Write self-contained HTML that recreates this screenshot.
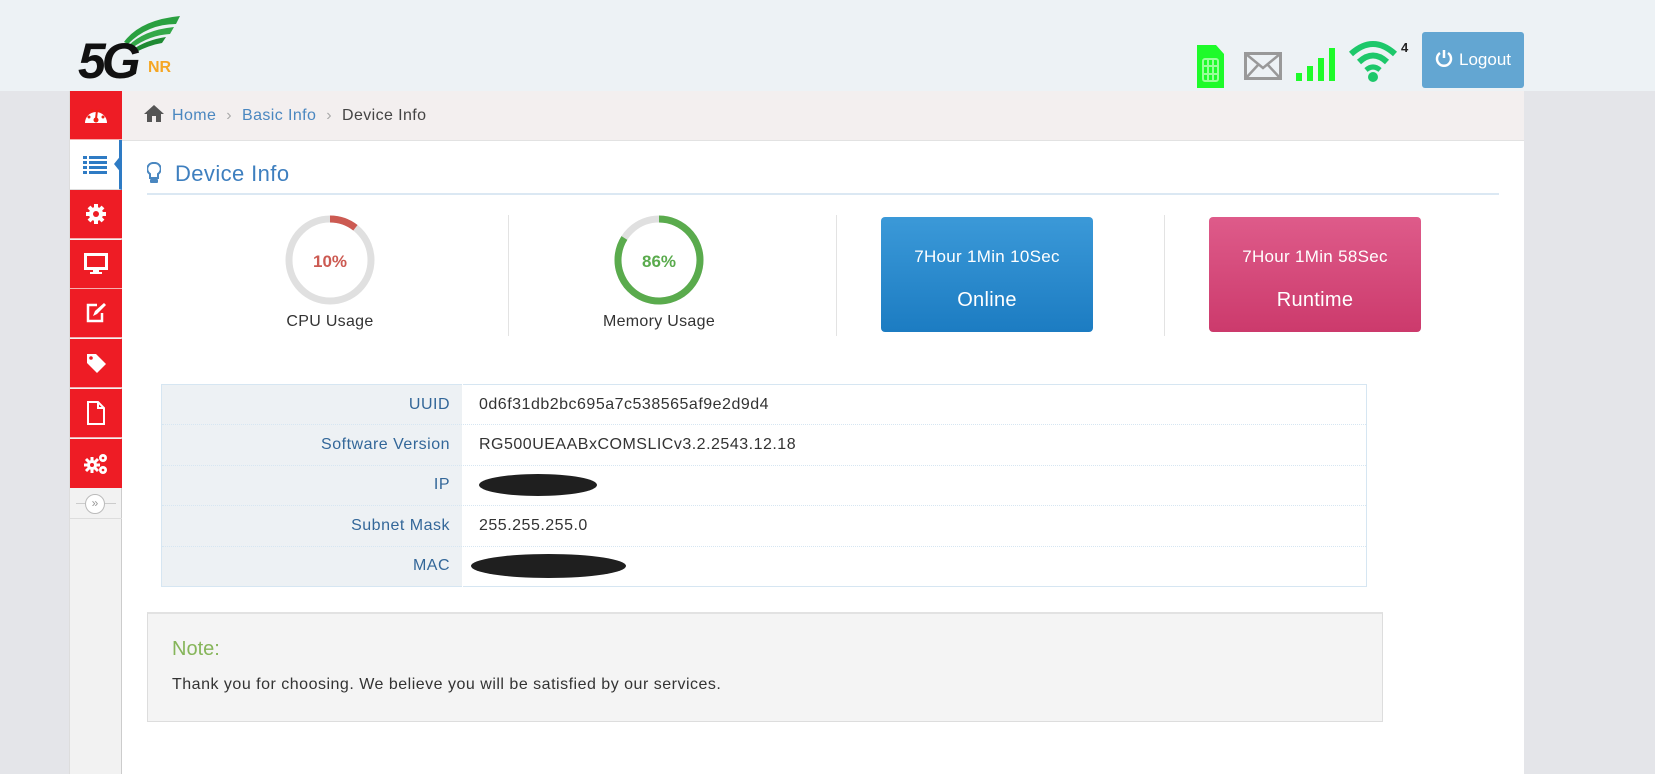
<!DOCTYPE html>
<html><head><meta charset="utf-8"><style>
*{box-sizing:border-box;margin:0;padding:0}
body{width:1655px;height:774px;overflow:hidden;background:#e4e5e9;font-family:"Liberation Sans",sans-serif;position:relative;color:#333}
.hdr{position:absolute;left:0;top:0;width:1655px;height:91px;background:#edf2f5}
.abs{position:absolute}
.side{position:absolute;left:69px;top:91px;width:53px;height:683px;background:#f2f2f2;border-right:1px solid #ccc;border-left:1px solid #ddd}
.it{position:absolute;left:0;width:52px;height:49px;background:#ee1c25;border-bottom:1px solid #f5b0b0;display:flex;align-items:center;justify-content:center}
.main{position:absolute;left:122px;top:91px;width:1402px;height:683px;background:#fff}
.bc{position:absolute;left:0;top:0;width:1402px;height:50px;background:#f3efef;border-bottom:1px solid #e2e2e2;font-size:16px;line-height:50px;padding-left:22px;letter-spacing:0.4px}
.bc a{color:#4a87c0}
.bc .s{color:#aaa;margin:0 10px}
.col{position:absolute;top:215px;height:121px;border-right:1px solid #e3e3e3}
.lbl{position:absolute;width:200px;text-align:center;font-size:16px;letter-spacing:0.3px;color:#333}
.box{position:absolute;top:217px;width:212px;height:115px;border-radius:4px;color:#fff;text-align:center;letter-spacing:0.3px}
.box .a{position:absolute;top:30px;width:100%;font-size:17px}
.box .b{position:absolute;top:72px;width:100%;font-size:20px}
table{position:absolute;left:161px;top:384px;width:1206px;border-collapse:collapse;border:1px solid #d6e6f2;font-size:16px;letter-spacing:0.5px}
td{height:40.4px;border-bottom:1px dotted #d6e6f2}
td.k{width:301px;background:#edf1f4;color:#336799;text-align:right;padding-right:12px;border-right:1px solid #fff}
td.v{padding-left:16px;color:#333}
.blot{display:inline-block;background:#1f1f1f;border-radius:50%;height:22px;vertical-align:middle}
</style></head><body>
<div class="hdr"></div>
<!-- logo -->
<svg class="abs" style="left:76px;top:12px" width="110" height="70" viewBox="0 0 110 70">
<path d="M48 30 Q64 8 104 4 L100 12 Q72 12 52 32Z" fill="#2aa040"/>
<path d="M52 34 Q68 18 98 15 L94 22 Q74 23 56 36Z" fill="#34a848"/>
<path d="M56 38 Q70 28 90 25 L86 31 Q74 33 60 40Z" fill="#1f8a33"/>
<text x="2" y="66" font-family="Liberation Sans" font-weight="bold" font-style="italic" font-size="50" fill="#111" letter-spacing="-4">5G</text>
<text x="72" y="60" font-family="Liberation Sans" font-weight="bold" font-size="16" fill="#f5a623">NR</text>
</svg>
<!-- sim -->
<svg class="abs" style="left:1195px;top:45px" width="30" height="43" viewBox="0 0 30 43"><path d="M2 0H21L29 9V43H2Z" fill="#1efb2a"/><rect x="8" y="14" width="15" height="22" rx="2" fill="none" stroke="#9f9" stroke-width="2"/><path d="M8 21H23M8 29H23M13 14V36M18 14V36" stroke="#9f9" stroke-width="2"/></svg>
<svg class="abs" style="left:1244px;top:52px" width="38" height="28" viewBox="0 0 38 28"><rect x="1.5" y="1.5" width="35" height="25" fill="none" stroke="#999" stroke-width="3"/><path d="M2 2L19 16L36 2M2 26L14 13M36 26L24 13" stroke="#999" stroke-width="2.5" fill="none"/></svg>
<svg class="abs" style="left:1295px;top:47px" width="40" height="34"><rect x="1" y="26" width="6" height="8" fill="#1efb2a"/><rect x="12" y="19" width="6" height="15" fill="#1efb2a"/><rect x="23" y="11" width="6" height="23" fill="#1efb2a"/><rect x="34" y="1" width="6" height="33" fill="#1efb2a"/></svg>
<svg class="abs" style="left:1348px;top:40px" width="50" height="42" viewBox="0 0 50 42"><path d="M3 14Q25 -6 47 14" stroke="#1dc86a" stroke-width="6" fill="none"/><path d="M11 22Q25 9 39 22" stroke="#1dc86a" stroke-width="6" fill="none"/><path d="M18 30Q25 24 32 30" stroke="#1dc86a" stroke-width="5" fill="none"/><circle cx="25" cy="37" r="5" fill="#1dc86a"/></svg>
<div class="abs" style="left:1401px;top:40px;font-size:13px;font-weight:bold;color:#222">4</div>
<div class="abs" style="left:1422px;top:32px;width:102px;height:56px;background:#63a6d2;border-radius:3px;color:#fff;font-size:17px;line-height:56px;padding-left:13px">
<svg width="18" height="18" viewBox="0 0 18 18" style="vertical-align:-2px;margin-right:6px"><path d="M5 4A7 7 0 1 0 13 4" stroke="#fff" stroke-width="2.5" fill="none"/><path d="M9 1V9" stroke="#fff" stroke-width="2.5"/></svg>Logout</div>

<div class="side">
<div class="it" style="top:0"><svg width="24" height="20" viewBox="0 0 24 20"><path d="M1 18A11 11 0 1 1 23 18Z" fill="#fff"/><circle cx="5" cy="12" r="1.5" fill="#e21"/><circle cx="8" cy="6" r="1.5" fill="#e21"/><circle cx="16" cy="6" r="1.5" fill="#e21"/><circle cx="19" cy="12" r="1.5" fill="#e21"/><path d="M13 5L12 14" stroke="#e21" stroke-width="2"/><circle cx="12" cy="15" r="2.5" fill="#e21"/></svg></div>
<div class="it" style="top:49px;height:50px;background:#fff;border-right:3px solid #2e7bc4;border-bottom:1px solid #ddd"><svg width="24" height="18"><g fill="#2e7bc4"><rect x="0" y="0" width="4" height="3"/><rect x="6" y="0" width="18" height="3"/><rect x="0" y="5" width="4" height="3"/><rect x="6" y="5" width="18" height="3"/><rect x="0" y="10" width="4" height="3"/><rect x="6" y="10" width="18" height="3"/><rect x="0" y="15" width="4" height="3"/><rect x="6" y="15" width="18" height="3"/></g></svg><svg class="abs" style="right:-3px;top:14px" width="8" height="20"><path d="M8 0L0 10L8 20Z" fill="#2e7bc4"/></svg></div>
<div class="it" style="top:99px"><svg width="22" height="22" viewBox="0 0 22 22"><circle cx="11" cy="11" r="7" fill="#fff"/><g stroke="#fff" stroke-width="4"><path d="M11 1V21M1 11H21M4 4L18 18M18 4L4 18"/></g><circle cx="11" cy="11" r="3" fill="#ee1c25"/></svg></div>
<div class="it" style="top:149px"><svg width="24" height="22"><rect x="1.5" y="1.5" width="21" height="14" fill="none" stroke="#fff" stroke-width="3"/><rect x="9" y="16" width="6" height="3" fill="#fff"/><rect x="6" y="19" width="12" height="2" fill="#fff"/></svg></div>
<div class="it" style="top:198px"><svg width="22" height="22"><path d="M12 3H3V19H17V11" fill="none" stroke="#fff" stroke-width="2.5"/><path d="M8 14L10 9L19 1L21 3L12 12Z" fill="#fff"/></svg></div>
<div class="it" style="top:248px"><svg width="22" height="22"><path d="M2 2H11L21 12L12 21L2 11Z" fill="#fff"/><circle cx="6" cy="6" r="1.8" fill="#ee1c25"/></svg></div>
<div class="it" style="top:298px"><svg width="20" height="24"><path d="M2 1H12L18 7V23H2Z" fill="none" stroke="#fff" stroke-width="2"/><path d="M12 1V7H18" fill="none" stroke="#fff" stroke-width="2"/></svg></div>
<div class="it" style="top:348px;border-bottom:none"><svg width="26" height="24" viewBox="0 0 26 24"><circle cx="9" cy="13" r="5" fill="#fff"/><g stroke="#fff" stroke-width="3"><path d="M9 5V21M1 13H17M3 7L15 19M15 7L3 19"/></g><circle cx="9" cy="13" r="2" fill="#ee1c25"/><circle cx="20" cy="6" r="4" fill="#fff"/><circle cx="20" cy="18" r="4" fill="#fff"/><circle cx="20" cy="6" r="1.3" fill="#ee1c25"/><circle cx="20" cy="18" r="1.3" fill="#ee1c25"/></svg></div>
<div class="abs" style="left:0;top:398px;width:52px;height:30px;border-bottom:1px solid #ddd"><div class="abs" style="left:6px;top:14px;width:40px;height:1px;background:#ccc"></div><div class="abs" style="left:15px;top:5px;width:20px;height:20px;border:1px solid #bbb;border-radius:50%;background:#fff;font-size:12px;line-height:17px;text-align:center;color:#999">»</div></div>
</div>

<div class="main">
<div class="bc"><svg width="20" height="17" viewBox="0 0 20 17" style="vertical-align:-2px;margin-right:8px"><path d="M10 0L0 9H3V17H8V11H12V17H17V9H20Z" fill="#555"/></svg><a>Home</a><span class="s">›</span><a>Basic Info</a><span class="s">›</span><span style="color:#444">Device Info</span></div>
</div>
<svg class="abs" style="left:147px;top:162px" width="14" height="22" viewBox="0 0 14 22"><path d="M7 1A6 6 0 0 0 3 12V16H11V12A6 6 0 0 0 7 1Z" fill="none" stroke="#4a87c0" stroke-width="2"/><rect x="3" y="17" width="8" height="4" rx="1" fill="#4a87c0"/></svg>
<div class="abs" style="left:175px;top:161px;font-size:22px;letter-spacing:0.4px;color:#3e7fbf">Device Info</div>
<div class="abs" style="left:147px;top:193px;width:1352px;height:2px;background:#dbe8f3"></div>

<div class="col" style="left:158px;width:351px"></div>
<div class="col" style="left:509px;width:328px"></div>
<div class="col" style="left:837px;width:328px"></div>
<svg class="abs" style="left:285px;top:215px" width="90" height="90" viewBox="0 0 90 90"><circle cx="45" cy="45" r="41" fill="none" stroke="#e0e0e0" stroke-width="7"/><path d="M45 4A41 41 0 0 1 70.4 12.8" fill="none" stroke="#cc5a52" stroke-width="7"/><text x="45" y="52" text-anchor="middle" font-size="17" font-weight="bold" font-family="Liberation Sans" fill="#cc5a52">10%</text></svg>
<div class="lbl" style="left:230px;top:313px">CPU Usage</div>
<svg class="abs" style="left:614px;top:215px" width="90" height="90" viewBox="0 0 90 90"><circle cx="45" cy="45" r="41" fill="none" stroke="#e0e0e0" stroke-width="7"/><path d="M45 4A41 41 0 1 1 10.4 23" fill="none" stroke="#5aab4d" stroke-width="7"/><text x="45" y="52" text-anchor="middle" font-size="17" font-weight="bold" font-family="Liberation Sans" fill="#5aab4d">86%</text></svg>
<div class="lbl" style="left:559px;top:313px">Memory Usage</div>
<div class="box" style="left:881px;background:linear-gradient(#3b99d8,#1c7cc2)"><div class="a">7Hour 1Min 10Sec</div><div class="b">Online</div></div>
<div class="box" style="left:1209px;background:linear-gradient(#de5b8a,#cc3a6c)"><div class="a">7Hour 1Min 58Sec</div><div class="b">Runtime</div></div>

<table>
<tr><td class="k">UUID</td><td class="v">0d6f31db2bc695a7c538565af9e2d9d4</td></tr>
<tr><td class="k">Software Version</td><td class="v">RG500UEAABxCOMSLICv3.2.2543.12.18</td></tr>
<tr><td class="k">IP</td><td class="v"><span class="blot" style="width:118px"></span></td></tr>
<tr><td class="k">Subnet Mask</td><td class="v">255.255.255.0</td></tr>
<tr><td class="k">MAC</td><td class="v"><span class="blot" style="width:155px;height:24px;margin-left:-8px"></span></td></tr>
</table>

<div class="abs" style="left:147px;top:612px;width:1236px;height:110px;background:#f4f4f4;border:1px solid #ddd;border-top:2px solid #e2e2e2">
<div class="abs" style="left:24px;top:24px;font-size:20px;color:#86b55a">Note:</div>
<div class="abs" style="left:24px;top:62px;font-size:16px;letter-spacing:0.5px;color:#333">Thank you for choosing. We believe you will be satisfied by our services.</div>
</div>
</body></html>
